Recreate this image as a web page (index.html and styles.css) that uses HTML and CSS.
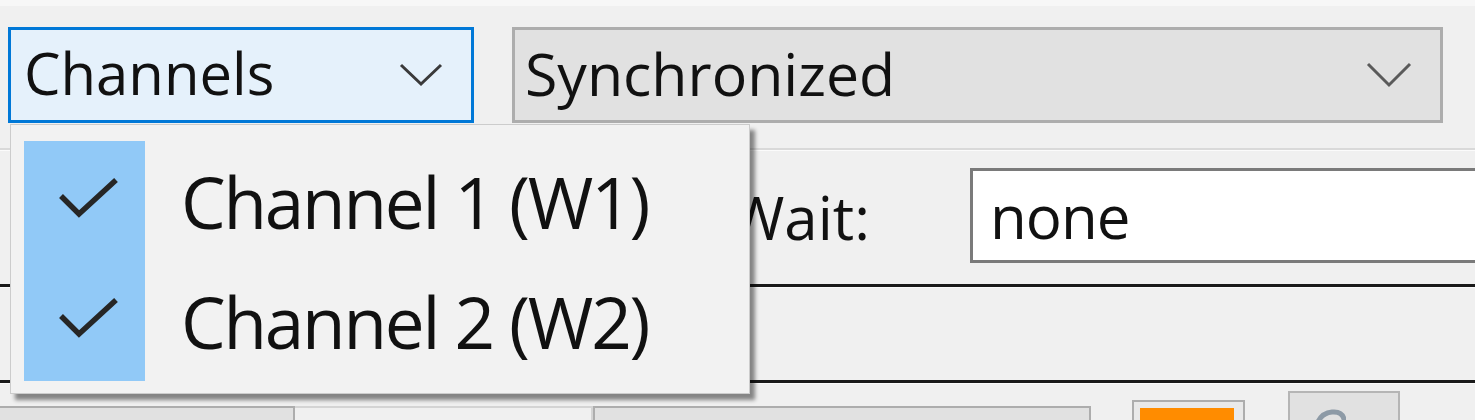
FILE: index.html
```html
<!DOCTYPE html>
<html>
<head>
<meta charset="utf-8">
<link rel="stylesheet" href="styles.css">
</head>
<body>
<div class="screen">
  <div class="toolbar">
    <div class="combo combo-active">
      <span class="combo-text">Channels</span>
      <svg class="chev" width="44" height="24" viewBox="0 0 44 24"><path d="M2 2 L22 21 L42 2" fill="none" stroke="#3a3a3a" stroke-width="3"/></svg>
    </div>
    <div class="combo combo-plain">
      <span class="combo-text">Synchronized</span>
      <svg class="chev" width="46" height="26" viewBox="0 0 46 26"><path d="M2 2 L23 23 L44 2" fill="none" stroke="#5a5a5a" stroke-width="3"/></svg>
    </div>
  </div>
  <div class="panel">
    <div class="wait-row">
      <span class="label">Wait:</span>
      <div class="textbox">none</div>
    </div>
    <div class="sep"></div>
    <div class="empty-row"></div>
    <div class="sep"></div>
    <div class="bottom-row">
      <div class="bbox bbox-a"></div>
      <div class="bbox bbox-b"></div>
      <div class="bbox bbox-c"></div>
      <div class="color-btn"><div class="swatch"></div></div>
      <div class="tool-btn">
        <svg width="34" height="20" viewBox="0 0 34 20"><path d="M4 20 Q8 6 20 5 Q30 4 32 12 L32 20" fill="none" stroke="#8d9aa6" stroke-width="5"/></svg>
      </div>
    </div>
  </div>
  <div class="menu">
    <div class="check-col"></div>
    <div class="item">
      <svg class="check" width="62" height="42" viewBox="0 0 62 42"><path d="M3 20 L21 38 L58 4" fill="none" stroke="#262626" stroke-width="5.5"/></svg>
      <span class="item-text">Channel 1 (W1)</span>
    </div>
    <div class="item">
      <svg class="check" width="62" height="42" viewBox="0 0 62 42"><path d="M3 20 L21 38 L58 4" fill="none" stroke="#262626" stroke-width="5.5"/></svg>
      <span class="item-text">Channel 2 (W2)</span>
    </div>
  </div>
</div>
</body>
</html>
```

FILE: styles.css
```css
* { box-sizing: border-box; }
html, body { margin: 0; padding: 0; }
body {
  background: #f0f0f0;
  font-family: "Open Sans", "Noto Sans", "Liberation Sans", sans-serif;
  color: #111;
}
.screen {
  position: relative;
  width: 1475px;
  height: 420px;
  overflow: hidden;
  border-top: 6px solid #f7f7f7;
}
.toolbar {
  display: flex;
  gap: 38px;
  padding: 21px 0 0 8px;
}
.combo {
  height: 96px;
  border: 3px solid;
  display: flex;
  align-items: center;
  justify-content: space-between;
  padding: 0 28px 0 13px;
}
.combo-active {
  width: 466px;
  background: #e5f1fb;
  border-color: #0078d7;
}
.combo-plain {
  width: 931px;
  background: #e1e1e1;
  border-color: #adadad;
  padding-left: 10px;
}
.combo-text {
  font-size: 58px;
  line-height: 1;
  margin-top: -4px;
}
.combo-plain .combo-text { font-size: 59px; }
.panel {
  margin-top: 25px;
  border-top: 2px solid #d9d9d9;
  box-shadow: inset 0 1px 0 #fbfbfb;
}
.wait-row {
  display: flex;
  align-items: center;
  height: 134px;
  padding-bottom: 4px;
}
.label {
  width: 870px;
  text-align: right;
  font-size: 60px;
  line-height: 1;
  margin-top: 4px;
}
.textbox {
  margin-left: 100px;
  flex: 1;
  height: 95px;
  background: #fff;
  border: 3px solid #7a7a7a;
  border-right: none;
  font-size: 60px;
  line-height: 1;
  display: flex;
  align-items: center;
  padding-left: 17px;
  padding-top: 2px;
  letter-spacing: -1px;
}
.sep {
  height: 4px;
  background: #1a1a1a;
  border-bottom: 1px solid #fafafa;
}
.empty-row { height: 92px; }
.bottom-row {
  display: flex;
  align-items: flex-start;
  height: 40px;
}
.bbox {
  margin-top: 22px;
  height: 30px;
  border: 2px solid #adadad;
  background: #e1e1e1;
}
.bbox-a { width: 295px; border-left: none; }
.bbox-b { width: 298px; background: #f0f0f0; border-left: none; border-color: #d4d4d4; }
.bbox-c { width: 498px; }
.color-btn {
  margin-left: 41px;
  margin-top: 16px;
  width: 113px;
  height: 40px;
  border: 2px solid #adadad;
  background: #e9e9e9;
  padding: 6px 9px 0 6px;
}
.swatch { height: 100%; background: #ff8c00; }
.tool-btn {
  margin-left: 43px;
  margin-top: 7px;
  width: 112px;
  height: 40px;
  border: 2px solid #b5b5b5;
  background: #e1e1e1;
  display: flex;
  padding: 14px 0 0 22px;
}
.menu {
  position: absolute;
  left: 10px;
  top: 118px;
  width: 740px;
  height: 270px;
  background: #f2f2f2;
  border: 1px solid #cccccc;
  box-shadow: 5px 6px 4px rgba(0,0,0,0.45);
  padding: 16px 0 0 13px;
}
.check-col {
  position: absolute;
  left: 13px;
  top: 16px;
  width: 121px;
  height: 240px;
  background: #91c9f7;
}
.item {
  position: relative;
  height: 120px;
  display: flex;
  align-items: center;
}
.check {
  margin-left: 34px;
  margin-top: -8px;
}
.item-text {
  margin-left: 61px;
  font-size: 71px;
  line-height: 1;
  letter-spacing: -2.2px;
  margin-top: 0;
}
```
